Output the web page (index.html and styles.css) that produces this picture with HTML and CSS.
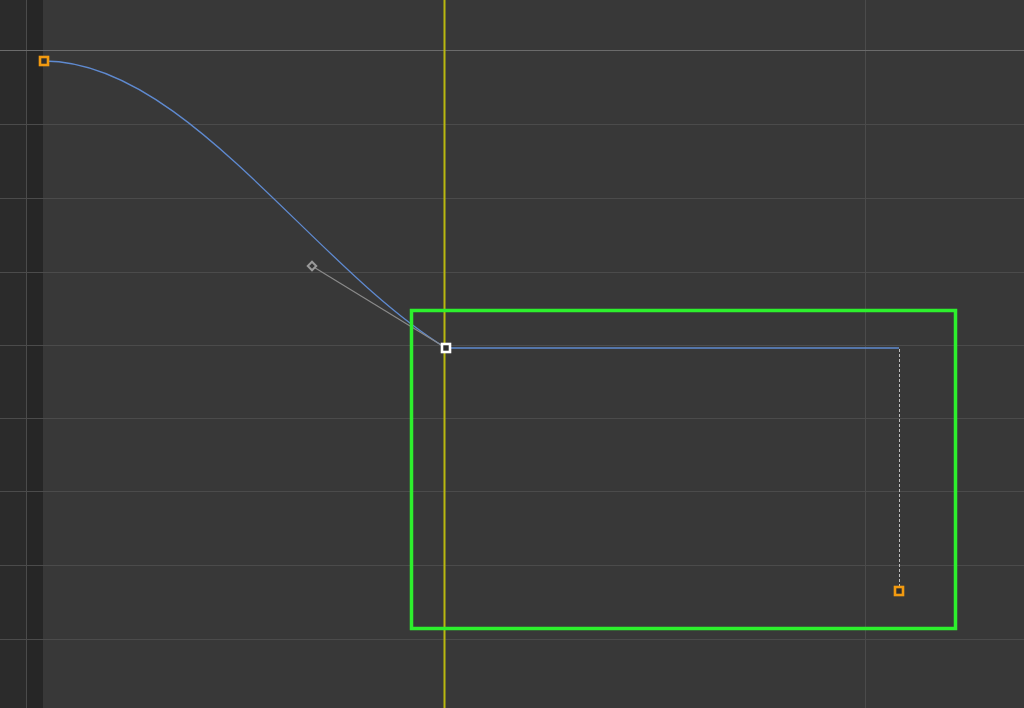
FILE: index.html
```html
<!DOCTYPE html>
<html>
<head>
<meta charset="utf-8">
<link rel="stylesheet" href="styles.css">
</head>
<body>
<div class="editor">
  <div class="gutter"></div>
  <div class="strip"></div>
  <div class="graph"></div>
  <svg class="overlay" width="1024" height="708" viewBox="0 0 1024 708">
    <g class="grid">
      <line x1="0" y1="124.5" x2="1024" y2="124.5"/>
      <line x1="0" y1="198.5" x2="1024" y2="198.5"/>
      <line x1="0" y1="272.5" x2="1024" y2="272.5"/>
      <line x1="0" y1="345.5" x2="1024" y2="345.5"/>
      <line x1="0" y1="418.5" x2="1024" y2="418.5"/>
      <line x1="0" y1="491.5" x2="1024" y2="491.5"/>
      <line x1="0" y1="565.5" x2="1024" y2="565.5"/>
      <line x1="0" y1="639.5" x2="1024" y2="639.5"/>
      <line x1="26.5" y1="0" x2="26.5" y2="708"/>
      <line x1="865.5" y1="0" x2="865.5" y2="708"/>
    </g>
    <line class="zero" x1="0" y1="50.5" x2="1024" y2="50.5"/>
    <line class="time" x1="444.5" y1="0" x2="444.5" y2="708"/>
    <path class="curve" d="M44 61 C 185 61, 312 266, 446 348 L 899 348"/>
    <line class="handle" x1="312" y1="266" x2="446" y2="348"/>
    <line class="dotted" x1="899.5" y1="349" x2="899.5" y2="586"/>
    <rect class="diamond" x="-3" y="-3" width="6" height="6" transform="translate(312 266) rotate(45)"/>
    <rect class="key" x="40" y="57" width="8" height="8"/>
    <rect class="key" x="895" y="587" width="8" height="8"/>
    <rect class="key sel" x="442" y="344" width="8" height="8"/>
    <rect class="box" x="411.5" y="310.5" width="544" height="318"/>
  </svg>
</div>
</body>
</html>
```
FILE: styles.css
```css
html, body {
  margin: 0;
  padding: 0;
  background: #383838;
  font-family: "Liberation Sans", sans-serif;
}
.editor {
  position: relative;
  display: flex;
  width: 1024px;
  height: 708px;
  overflow: hidden;
}
.gutter {
  width: 26px;
  background: #2b2b2b;
}
.strip {
  width: 17px;
  background: #262626;
}
.graph {
  flex: 1;
  background: #383838;
}
.overlay {
  position: absolute;
  left: 0;
  top: 0;
}
.grid line {
  stroke: #4b4b4b;
  stroke-width: 1;
}
.zero {
  stroke: #6b6b6b;
  stroke-width: 1;
}
.time {
  stroke: #b9b80f;
  stroke-width: 2;
}
.curve {
  fill: none;
  stroke: #5f8ad0;
  stroke-width: 1.3;
}
.handle {
  stroke: #8a8a8a;
  stroke-width: 1.2;
}
.dotted {
  stroke: #bdbdbd;
  stroke-width: 1;
  stroke-dasharray: 3 2;
}
.diamond {
  fill: #383838;
  stroke: #9a9a9a;
  stroke-width: 2;
}
.key {
  fill: #2e2e2e;
  stroke: #f29a10;
  stroke-width: 2.6;
}
.key.sel {
  stroke: #ffffff;
  fill: #2e2e2e;
}
.box {
  fill: none;
  stroke: #2df02d;
  stroke-width: 3.5;
}
```
